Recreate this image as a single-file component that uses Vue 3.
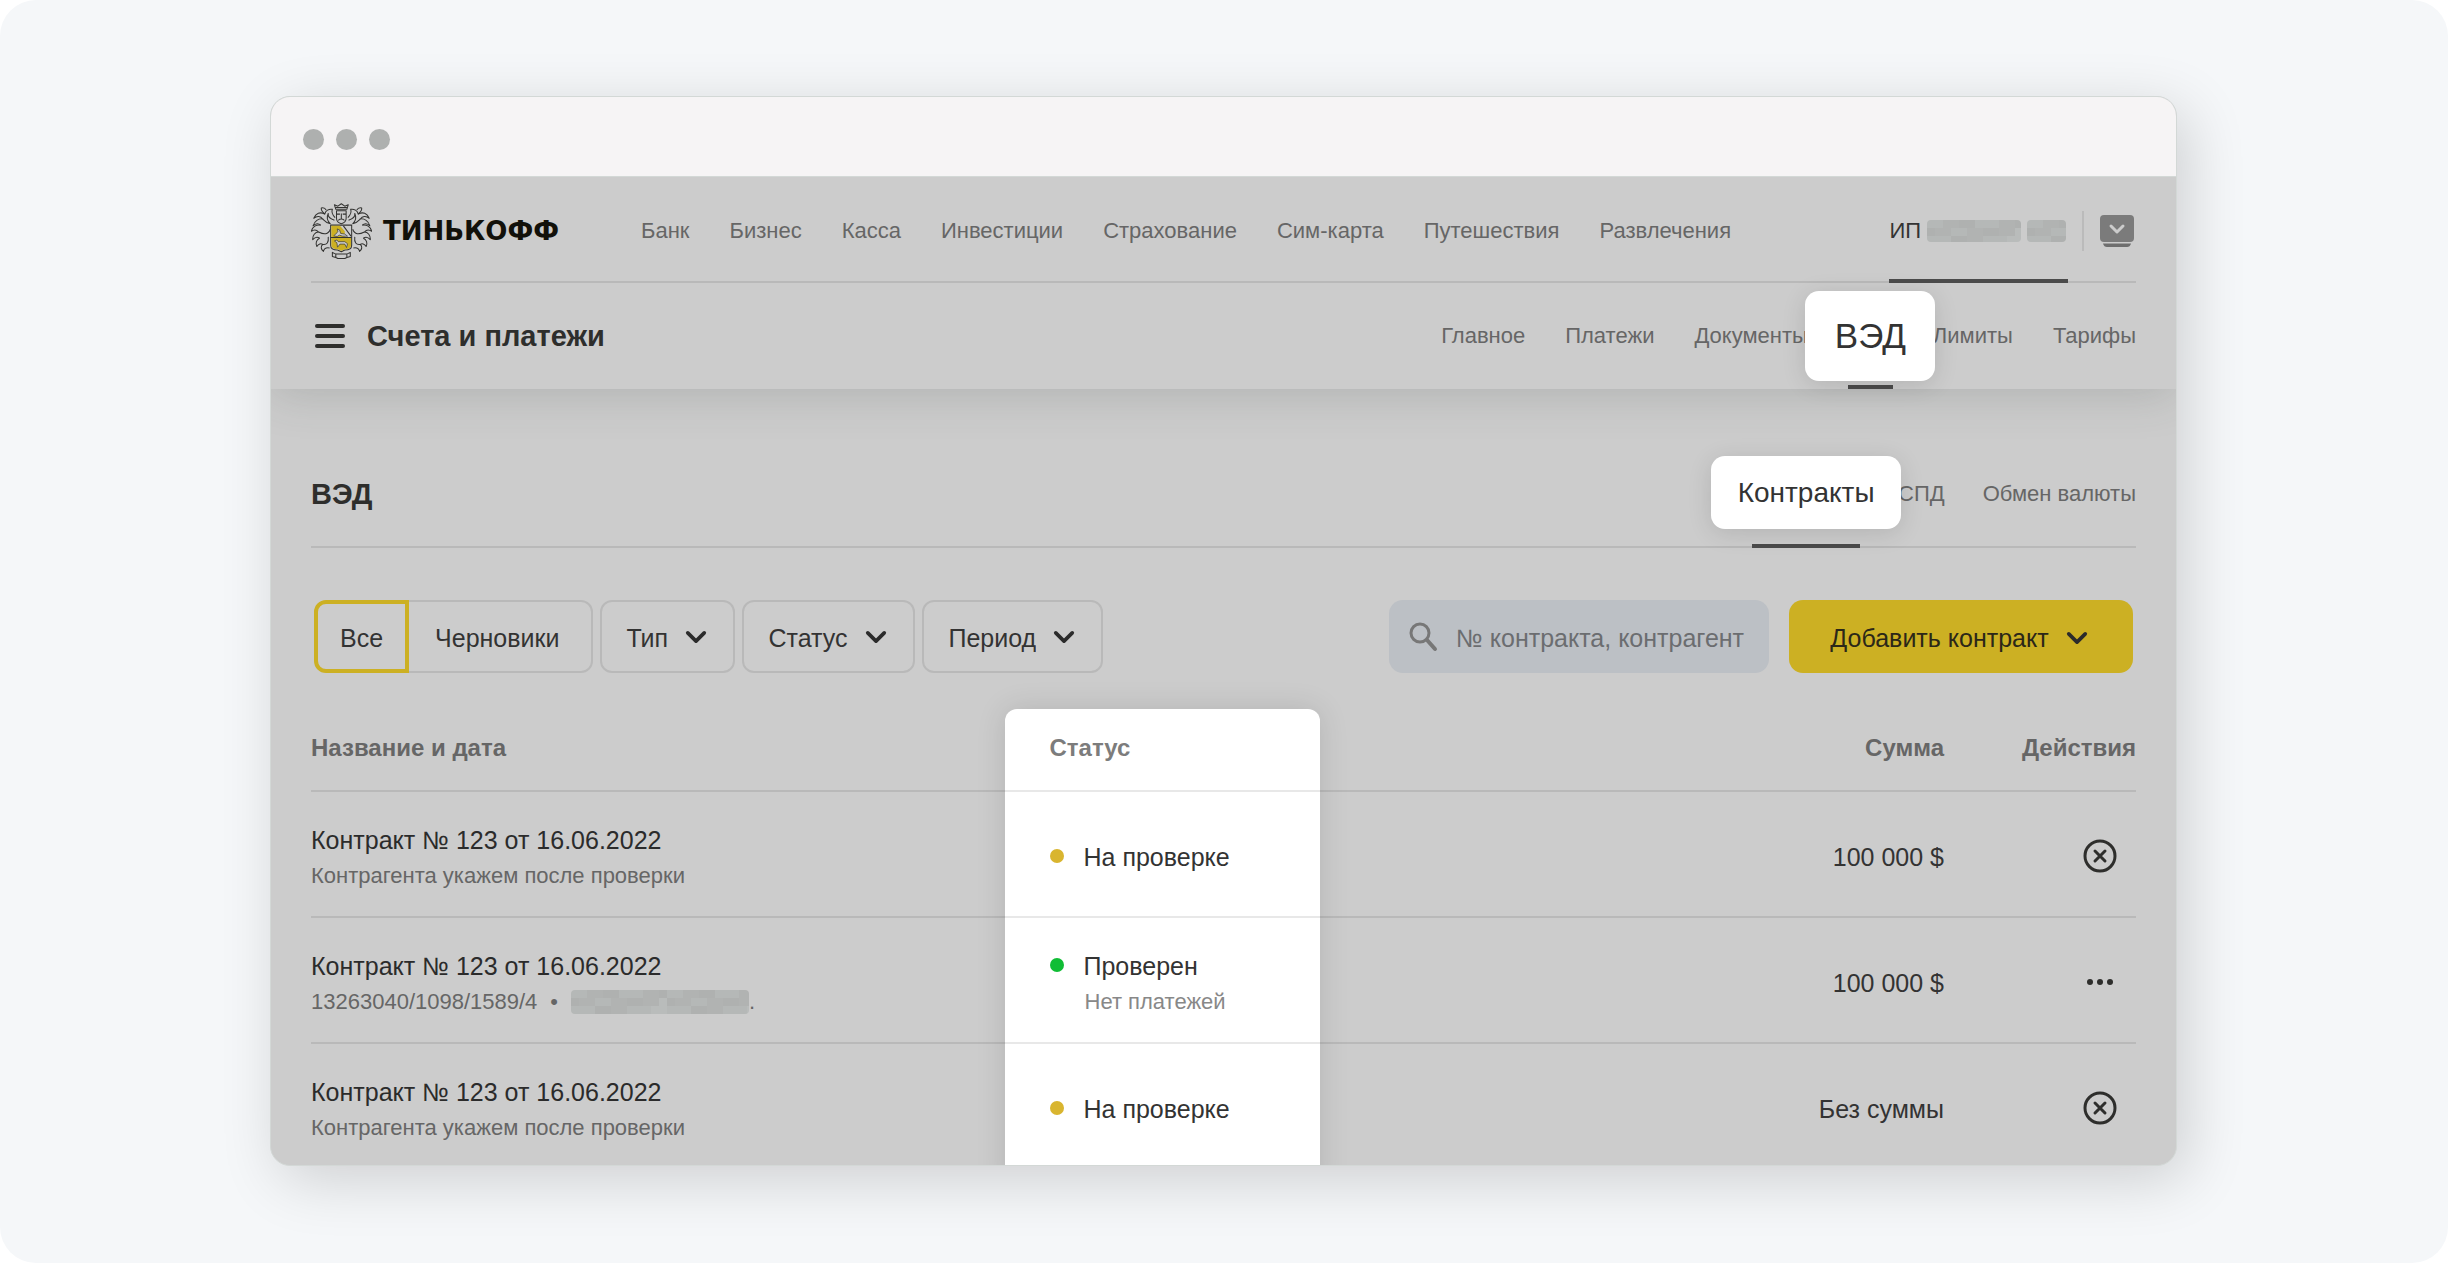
<script setup>
import { ref } from 'vue'

const productLinks = ['Банк', 'Бизнес', 'Касса', 'Инвестиции', 'Страхование', 'Сим-карта', 'Путешествия', 'Развлечения']
const accountLinks = ['Главное', 'Платежи', 'Документы', 'ВЭД', 'Лимиты', 'Тарифы']
const sectionLinks = ['Контракты', 'СПД', 'Обмен валюты']
const dropdowns = ['Тип', 'Статус', 'Период']

const scope = ref('all')
const query = ref('')

const contracts = [
  { title: 'Контракт № 123 от 16.06.2022', note: 'Контрагента укажем после проверки', status: 'На проверке', tone: 'pending', sum: '100 000 $', action: 'cancel' },
  { title: 'Контракт № 123 от 16.06.2022', number: '13263040/1098/1589/4', status: 'Проверен', detail: 'Нет платежей', tone: 'done', sum: '100 000 $', action: 'more' },
  { title: 'Контракт № 123 от 16.06.2022', note: 'Контрагента укажем после проверки', status: 'На проверке', tone: 'pending', sum: 'Без суммы', action: 'cancel' }
]

// Shades of the mosaic that hides personal data, three rows of cells
const shades = ['#b5b8b7', '#b1b3b2', '#b9bcbb', '#afb1b0']
const pattern = ['001133000113', '311001133112', '000331100022']
function mosaic(columns) {
  const cells = []
  pattern.forEach((row, y) => {
    for (let x = 0; x < columns; x++) {
      cells.push({ x: x * 8, y: y * 8, fill: shades[row[x % row.length]] })
    }
  })
  return cells
}
</script>

<template>
  <div class="stage">
    <main class="window">
      <div class="titlebar"><i></i><i></i><i></i></div>

      <header class="header">
        <div class="row top">
          <a class="logo" href="#">
            <svg class="crest" viewBox="0 0 177 162" fill="none" stroke="#333331" stroke-width="3" stroke-linejoin="round" aria-hidden="true">
              <g v-for="side in ['', 'translate(177 0) scale(-1 1)']" :key="side" :transform="side">
                <path d="M70 42C62 34 58 28 62 18C52 16 42 22 40 32C34 26 28 22 30 14C36 12 42 16 44 20" />
                <path d="M40 32C26 24 14 30 8 44C18 36 28 38 34 46C22 44 10 52 6 66C14 58 22 58 28 64" />
                <path d="M28 64C16 62 4 68 1 82C9 76 17 78 22 84C12 84 4 94 5 106C12 98 20 98 25 102" />
                <path d="M25 102C16 106 12 116 17 126C22 118 29 116 34 120C28 126 28 134 36 140C38 132 44 128 54 130" />
                <path d="M68 50C56 46 48 40 50 30C44 42 48 52 56 60C44 58 38 50 34 46M56 76C50 92 38 92 22 84M50 98C52 114 46 122 34 120" />
              </g>
              <path d="M72 18L68 5L78 9L88 2L98 9L108 5L104 18ZM72 13H104" />
              <path d="M74 22H102V44C102 52 95 58 88 60C81 58 74 52 74 44ZM74 32H84M102 32H92M88 30V46M79 50C84 46 92 46 97 50" />
              <path fill="#ccc" d="M57 64H118V122C118 132 108 136 98 136L88 141L77 136C67 136 57 132 57 122Z" />
              <path fill="#ccb023" stroke="none" d="M59 66H84L98 82V99H116V122C116 131 106 134 98 134L88 138L78 134C69 134 59 130 59 122Z" />
              <path fill="#ccc" stroke-width="2" d="M66 95C70 90 76 88 78 82L76 75L83 78L86 88L98 90L106 96H92L82 93L76 97ZM68 110L75 107L79 112H98L106 118L103 129L98 119H84L77 128L75 115Z" />
              <path d="M57 100H118M94 66L116 96M62 143L72 148H104L114 143V155L104 158L98 161H78L72 158L62 155ZM72 148V158M104 148V158" />
            </svg>
            <span>ТИНЬКОФФ</span>
          </a>
          <nav class="links products">
            <a v-for="name in productLinks" :key="name" href="#">{{ name }}</a>
          </nav>
          <a class="account" href="#">
            <span>ИП</span>
            <svg class="mosaic" width="94" height="22" viewBox="0 0 94 22"><rect v-for="(c, i) in mosaic(12)" :key="i" :x="c.x" :y="c.y" width="8" height="8" :fill="c.fill" /></svg>
            <svg class="mosaic" width="39" height="22" viewBox="0 0 39 22"><rect v-for="(c, i) in mosaic(5)" :key="i" :x="c.x" :y="c.y" width="8" height="8" :fill="c.fill" /></svg>
          </a>
          <button class="switcher" aria-label="Сменить компанию">
            <svg width="34" height="32" viewBox="0 0 34 32">
              <rect width="34" height="27" rx="4" fill="#7b7b7b" />
              <path d="M3 28.500H31Q30 32 27 32H7Q4 32 3 28.500Z" fill="#6e6e6e" />
              <path d="M11 11L17 17L23 11" fill="none" stroke="#ccc" stroke-width="3" stroke-linecap="round" stroke-linejoin="round" />
            </svg>
          </button>
        </div>

        <div class="row second">
          <button class="burger" aria-label="Меню"><i></i><i></i><i></i></button>
          <h1>Счета и платежи</h1>
          <nav class="links accounts">
            <a v-for="name in accountLinks" :key="name" href="#" :class="{ current: name === 'ВЭД' }"><span>{{ name }}</span></a>
          </nav>
        </div>
      </header>

      <section class="body">
        <div class="section-head">
          <h2>ВЭД</h2>
          <nav class="links sections">
            <a v-for="name in sectionLinks" :key="name" href="#" :class="{ current: name === 'Контракты' }"><span>{{ name }}</span></a>
          </nav>
        </div>

        <div class="filters">
          <div class="toggle">
            <button :class="{ active: scope === 'all' }" @click="scope = 'all'">Все</button>
            <button :class="{ active: scope === 'drafts' }" @click="scope = 'drafts'">Черновики</button>
          </div>
          <div v-for="name in dropdowns" :key="name" class="dropdown">
            <select :aria-label="name"><option>{{ name }}</option></select>
            <svg class="chevron" viewBox="0 0 24 15"><path d="M3 3L12 12L21 3" /></svg>
          </div>
          <label class="search">
            <svg width="30" height="30" viewBox="0 0 30 30" fill="none" stroke="#777" stroke-width="3" stroke-linecap="round"><circle cx="12" cy="11" r="9" /><path d="M19 18L27 27" stroke-width="4" /></svg>
            <input v-model="query" type="text" aria-label="Поиск" placeholder="№ контракта, контрагент" />
          </label>
          <button class="add">Добавить контракт <svg class="chevron" viewBox="0 0 24 15"><path d="M3 3L12 12L21 3" /></svg></button>
        </div>

        <div class="table-wrap">
          <table>
            <thead>
              <tr><th class="c-name">Название и дата</th><th class="c-status">Статус</th><th class="c-sum">Сумма</th><th class="c-action">Действия</th></tr>
            </thead>
            <tbody>
              <tr v-for="(item, i) in contracts" :key="i">
                <td>
                  <div class="name">{{ item.title }}</div>
                  <div v-if="item.note" class="note">{{ item.note }}</div>
                  <div v-else class="note masked">
                    <span>{{ item.number }}</span><span class="bullet">•</span>
                    <svg class="mosaic" width="178" height="24" viewBox="0 0 178 24"><rect v-for="(c, k) in mosaic(23)" :key="k" :x="c.x" :y="c.y" width="8" height="8" :fill="c.fill" /></svg><span>.</span>
                  </div>
                </td>
                <td class="c-status">
                  <div class="status" :class="item.tone"><i></i>{{ item.status }}</div>
                  <div v-if="item.detail" class="detail">{{ item.detail }}</div>
                </td>
                <td class="c-sum">{{ item.sum }}</td>
                <td class="c-action">
                  <button v-if="item.action === 'cancel'" aria-label="Отменить">
                    <svg width="34" height="34" viewBox="0 0 34 34" fill="none" stroke="#2e2e2c" stroke-width="3" stroke-linecap="round"><circle cx="17" cy="17" r="15" /><path d="M12 12L22 22M22 12L12 22" /></svg>
                  </button>
                  <button v-else aria-label="Ещё">
                    <svg width="34" height="34" viewBox="0 0 34 34" fill="#2e2e2c"><circle cx="7" cy="17" r="3" /><circle cx="17" cy="17" r="3" /><circle cx="27" cy="17" r="3" /></svg>
                  </button>
                </td>
              </tr>
            </tbody>
          </table>
        </div>
      </section>
    </main>
  </div>
</template>

<style>
body {
  margin: 0;
  background: #fff;
}
</style>

<style scoped>
* {
  box-sizing: border-box;
}
.stage {
  min-height: 100vh;
  padding: 96px 271px 96px 270px;
  border-radius: 36px;
  background: #f5f7f9;
  font: 25px/36px "Liberation Sans", Arial, sans-serif;
  color: #333;
}
button,
input,
select {
  font: inherit;
  color: inherit;
  background: none;
  border: 0;
  padding: 0;
  margin: 0;
  appearance: none;
}
a {
  color: inherit;
  text-decoration: none;
}
svg {
  display: block;
  flex: none;
}
h1,
h2 {
  margin: 0;
  font-size: 29px;
  font-weight: 700;
  color: #2e2e2c;
}
.window {
  overflow: hidden;
  border: 1px solid #d3d8d6;
  border-radius: 20px;
  background: #ccc;
  box-shadow: 10px 14px 60px rgba(0, 0, 0, 0.16);
}
.titlebar {
  position: relative;
  z-index: 1;
  display: flex;
  align-items: center;
  gap: 12px;
  height: 80px;
  padding: 6px 32px 0;
  background: #f6f4f5;
  border-bottom: 1px solid #d3d8d6;
}
.titlebar i {
  width: 21px;
  height: 21px;
  border-radius: 50%;
  background: #aeb0af;
}
.header {
  position: relative;
  padding: 0 40px;
  box-shadow: 0 4px 44px rgba(60, 70, 66, 0.2);
}
.row {
  display: flex;
  align-items: center;
}
.top {
  height: 106px;
  padding-top: 3px;
  border-bottom: 2px solid #b9b9b9;
}
.logo {
  display: flex;
  align-items: center;
  gap: 11px;
  color: #12110a;
  font: 700 26px/36px "DejaVu Sans", sans-serif;
}
.crest {
  width: 61px;
  height: 56px;
}
.links {
  display: flex;
  align-items: center;
  align-self: stretch;
  gap: 40px;
  font-size: 22px;
  color: #666;
}
.products {
  margin-left: 82px;
}
.account {
  position: relative;
  display: flex;
  align-items: center;
  align-self: stretch;
  gap: 6px;
  margin-left: auto;
  padding-right: 2px;
  font-size: 22px;
}
.account::after {
  content: "";
  position: absolute;
  inset: auto 0 -2px;
  height: 4px;
  background: #4b4b4b;
}
.mosaic {
  border-radius: 4px;
}
.switcher {
  margin-left: 14px;
  padding: 4px 2px 4px 16px;
  border-left: 2px solid #bbb;
}
.second {
  height: 106px;
}
.burger {
  display: grid;
  gap: 6px;
  width: 30px;
  margin: 0 22px 0 4px;
}
.burger i {
  height: 4px;
  border-radius: 2px;
  background: #2e2e2c;
}
.accounts,
.sections {
  margin-left: auto;
}
.current {
  position: relative;
  display: flex;
  align-items: center;
  justify-content: center;
  align-self: stretch;
  width: 45px;
}
.current::after {
  content: "";
  position: absolute;
  inset: auto 0 0;
  height: 4px;
  background: #4b4b4b;
}
.current span {
  position: absolute;
  z-index: 1;
  width: 130px;
  border-radius: 14px;
  background: #fff;
  box-shadow: 0 4px 24px rgba(0, 0, 0, 0.12);
  color: #333;
  font-size: 35px;
  line-height: 90px;
  text-align: center;
}
.body {
  padding: 0 40px;
}
.section-head {
  display: flex;
  align-items: center;
  height: 159px;
  padding-top: 52px;
  border-bottom: 2px solid #b9b9b9;
}
.sections {
  gap: 38px;
}
.sections .current {
  width: 108px;
}
.sections .current::after {
  bottom: -2px;
}
.sections .current span {
  width: 190px;
  margin-bottom: 3px;
  font-size: 28px;
  line-height: 73px;
}
.filters {
  display: flex;
  gap: 7px;
  height: 73px;
  margin: 52px 3px 36px;
}
.toggle {
  display: flex;
}
.toggle button {
  padding: 2px 32px 0 26px;
  border: 2px solid #b9b9b9;
}
.toggle button:first-child {
  border-right: 0;
  border-radius: 12px 0 0 12px;
}
.toggle button:last-child {
  border-left: 0;
  border-radius: 0 12px 12px 0;
}
.toggle button.active {
  padding: 2px 22px 0;
  border: 4px solid #ccb023;
}
.dropdown {
  position: relative;
  display: flex;
}
.dropdown select {
  padding: 2px 65px 0 24px;
  border: 2px solid #b9b9b9;
  border-radius: 12px;
}
.chevron {
  width: 22px;
  height: 14px;
  fill: none;
  stroke: #2b2b2b;
  stroke-width: 4px;
  stroke-linecap: round;
  stroke-linejoin: round;
}
.dropdown .chevron {
  position: absolute;
  top: 30px;
  right: 28px;
  pointer-events: none;
}
.search {
  display: flex;
  align-items: center;
  gap: 18px;
  width: 380px;
  margin-left: auto;
  padding: 0 19px;
  border-radius: 14px;
  background: #bcc0c5;
}
.search input {
  flex: 1;
  min-width: 0;
  padding-top: 2px;
  outline: 0;
}
.search input::placeholder {
  color: #6b6d70;
  opacity: 1;
}
.add {
  display: flex;
  align-items: center;
  justify-content: center;
  gap: 17px;
  width: 344px;
  margin-left: 13px;
  padding: 2px 4px 0 0;
  border-radius: 14px;
  background: #ccb023;
  color: #2b2718;
}
.table-wrap {
  isolation: isolate;
  margin-bottom: -5px;
}
table {
  width: 100%;
  table-layout: fixed;
  border-collapse: separate;
  border-spacing: 0;
}
th,
td {
  padding: 0;
  border-bottom: 2px solid rgba(0, 0, 0, 0.09);
  text-align: left;
}
th {
  height: 83px;
  padding-bottom: 4px;
  font-size: 24px;
  color: #666;
}
td {
  height: 126px;
}
.c-name {
  width: 38%;
}
.c-status {
  width: 315px;
  padding-left: 45px;
}
th.c-status {
  position: relative;
  color: #7c7c7c;
}
/* Lit panel behind the whole status column */
th.c-status::before {
  content: "";
  position: absolute;
  z-index: -1;
  inset: 0 0 -400px;
  border-radius: 12px 12px 0 0;
  background: #fff;
  box-shadow: 0 0 30px rgba(0, 0, 0, 0.12);
}
.c-sum {
  text-align: right;
}
td.c-sum {
  padding-top: 6px;
}
.c-action {
  width: 192px;
  text-align: right;
}
.name {
  padding-top: 10px;
  line-height: 34px;
  color: #2b2b2b;
}
.note,
.detail {
  font-size: 22px;
  line-height: 38px;
  color: #666;
}
.masked {
  display: flex;
  align-items: center;
}
.bullet {
  margin: 0 13px;
}
.status {
  display: flex;
  align-items: center;
  gap: 20px;
  padding-top: 6px;
  line-height: 34px;
}
.status i {
  width: 14px;
  height: 14px;
  margin-bottom: 3px;
  border-radius: 50%;
  background: #d9b52f;
}
.status.done i {
  background: #10bd35;
}
.status.done {
  padding-top: 10px;
}
.detail {
  padding-left: 35px;
  color: #888;
}
.c-action button {
  display: inline-block;
  margin-right: 19px;
  vertical-align: middle;
}
</style>
